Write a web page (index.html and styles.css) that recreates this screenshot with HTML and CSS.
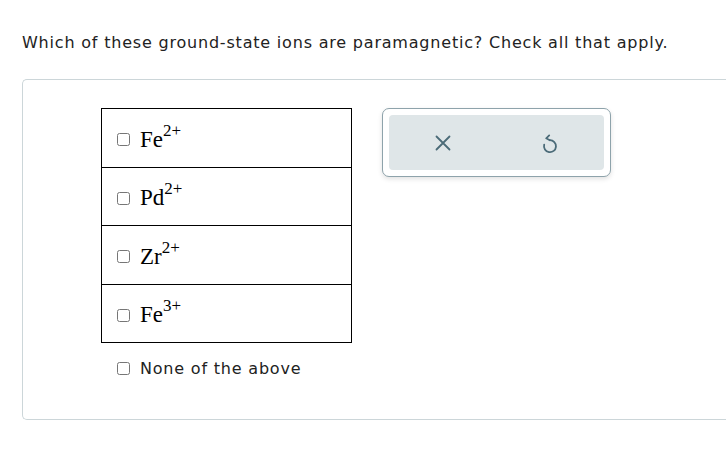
FILE: index.html
```html
<!DOCTYPE html>
<html>
<head>
<meta charset="utf-8">
<link rel="stylesheet" href="styles.css">
</head>
<body>
<p class="question">Which of these ground-state ions are paramagnetic? Check all that apply.</p>
<div class="panel">
  <div class="top">
    <div class="choices">
      <label class="choice"><input type="checkbox"><span class="ion">Fe<sup>2+</sup></span></label>
      <label class="choice"><input type="checkbox"><span class="ion">Pd<sup>2+</sup></span></label>
      <label class="choice"><input type="checkbox"><span class="ion">Zr<sup>2+</sup></span></label>
      <label class="choice"><input type="checkbox"><span class="ion">Fe<sup>3+</sup></span></label>
    </div>
    <div class="tools">
      <div class="tools-inner">
        <button class="tool" aria-label="Clear">
          <svg width="16" height="16" viewBox="0 0 16 16"><path d="M1.5 1.5L14.5 14.5M14.5 1.5L1.5 14.5" stroke="#4b6b78" stroke-width="1.8" fill="none" stroke-linecap="round"/></svg>
        </button>
        <button class="tool" aria-label="Reset">
          <svg class="reset" width="18" height="20" viewBox="0 0 18 20"><path d="M8.2 1.4L5.2 4.3L8.8 6.2" stroke="#4b6b78" stroke-width="1.8" fill="none" stroke-linecap="round" stroke-linejoin="round"/><path d="M8.8 6.2A6 6 0 1 1 3.2 10.6" stroke="#4b6b78" stroke-width="1.8" fill="none" stroke-linecap="round"/></svg>
        </button>
      </div>
    </div>
  </div>
  <label class="none"><input type="checkbox"><span>None of the above</span></label>
</div>
</body>
</html>
```
FILE: styles.css
```css
html, body {
  margin: 0;
  padding: 0;
  background: #ffffff;
  overflow: hidden;
}
body {
  font-family: "DejaVu Sans", Verdana, sans-serif;
  color: #222;
}
.question {
  margin: 0;
  padding: 33px 0 0 22px;
  font-size: 16px;
  letter-spacing: 0.8px;
  line-height: 20px;
  height: 46px;
}
.panel {
  margin-left: 22px;
  width: 704px;
  box-sizing: border-box;
  height: 341px;
  border: 1px solid #ccd6d9;
  border-right: none;
  border-radius: 5px 0 0 5px;
  padding: 28px 0 0 78px;
}
.top {
  display: flex;
  align-items: flex-start;
  gap: 30px;
}
.choices {
  width: 251px;
  box-sizing: border-box;
  border: 1px solid #000;
  border-bottom: none;
}
.choice {
  display: flex;
  align-items: center;
  height: 57.5px;
  border-bottom: 1px solid #000;
  padding-left: 15px;
  font-family: "Liberation Serif", "Times New Roman", serif;
  font-size: 23px;
  color: #000;
}
.choice input, .none input {
  margin: 0 10px 0 0;
  width: 13px;
  height: 13px;
}
.choice input {
  position: relative;
  top: 2px;
}
.ion {
  position: relative;
  top: 2px;
}
.ion sup {
  font-family: "Liberation Serif", "Times New Roman", serif;
  font-size: 17px;
  vertical-align: 11px;
  line-height: 0;
}
.tools {
  width: 229px;
  box-sizing: border-box;
  border: 1px solid #8ea3ab;
  border-radius: 7px;
  padding: 6px;
  background: #fff;
  box-shadow: 0 2px 5px rgba(0,0,0,0.12);
}
.tools-inner {
  display: flex;
  height: 55px;
  background: #dfe6e8;
  border-radius: 4px;
}
.tool {
  flex: 1;
  border: none;
  background: transparent;
  padding: 0;
  display: flex;
  align-items: center;
  justify-content: center;
}
.reset {
  position: relative;
  top: 1px;
}
.none {
  display: flex;
  align-items: center;
  margin: 15px 0 0 16px;
  font-size: 16px;
  letter-spacing: 0.8px;
  color: #222;
  height: 20px;
}
```
